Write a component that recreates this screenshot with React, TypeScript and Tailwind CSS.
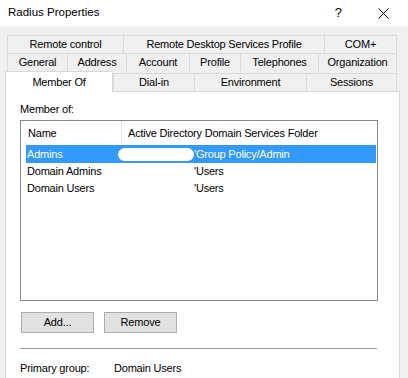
import React from "react";

const font = { fontFamily: '"Liberation Sans", Arial, sans-serif' };

function Tab({ w, label, last }: { w: number; label: string; last?: boolean }) {
  return (
    <div
      className={`h-[18px] flex items-center justify-center border-t border-l border-[#d9d9d9] bg-[#f0f0f0] text-[11px] tracking-[-0.2px] leading-none text-black whitespace-nowrap ${last ? "border-r" : ""}`}
      style={{ width: w }}
    >
      {label}
    </div>
  );
}

export default function App() {
  return (
    <div className="w-[408px] h-[378px] bg-[#f0f0f0] overflow-hidden text-black" style={font}>
      {/* title bar */}
      <div className="h-[26px] bg-white flex items-center pl-[8px] pr-[16px] text-[11.5px]">
        <span>Radius Properties</span>
        <span className="ml-auto mr-[36px] text-[13px]">?</span>
        <svg width="11" height="11" viewBox="0 0 11 11" className="mr-[3px]">
          <path d="M0.5 0.5 L10.5 10.5 M10.5 0.5 L0.5 10.5" stroke="#000" strokeWidth="1" />
        </svg>
      </div>

      <div className="pt-[9px] pl-[5px] w-[400px]">
        {/* row 1 */}
        <div className="flex pl-[2px]">
          <Tab w={116} label="Remote control" />
          <Tab w={201} label="Remote Desktop Services Profile" />
          <Tab w={73} label="COM+" last />
        </div>
        {/* row 2 */}
        <div className="flex pl-[2px]">
          <Tab w={60} label="General" />
          <Tab w={59} label="Address" />
          <Tab w={63} label="Account" />
          <Tab w={51} label="Profile" />
          <Tab w={78} label="Telephones" />
          <Tab w={79} label="Organization" last />
        </div>
        {/* row 3 */}
        <div className="flex items-end">
          <div className="relative z-10 w-[108px] h-[21px] -mb-px bg-white border-t border-l border-r border-[#d9d9d9] flex items-start justify-center pt-[4px] text-[11px] tracking-[-0.2px] leading-[12px]">
            Member Of
          </div>
          <Tab w={81} label="Dial-in" />
          <Tab w={112} label="Environment" />
          <Tab w={91} label="Sessions" last />
        </div>

        {/* panel */}
        <div className="h-[300px] bg-white border border-[#d9d9d9] pl-[14px] pr-[21px] pt-[10px] text-[11px] tracking-[-0.2px]">
          <div className="h-[15px] leading-[15px]">Member of:</div>
          <div className="mt-[3px] h-[181px] border border-[#828790] bg-white pl-[5px] pr-[1px]">
            <div className="flex h-[24px] items-center">
              <div className="w-[96px] h-full flex items-center pl-[2px] border-r border-[#e5e5e5]">Name</div>
              <div className="pl-[6px]">Active Directory Domain Services Folder</div>
            </div>
            <div className="flex h-[18px] items-center bg-[#3399ff] text-white relative">
              <div className="w-[92px] pl-[1px]">Admins</div>
              <div className="w-[76px] h-[13px] rounded-full bg-white"></div>
              <div>'Group Policy/Admin</div>
            </div>
            <div className="flex h-[17px] items-center">
              <div className="w-[168px] pl-[1px]">Domain Admins</div>
              <div>'Users</div>
            </div>
            <div className="flex h-[17px] items-center">
              <div className="w-[168px] pl-[1px]">Domain Users</div>
              <div>'Users</div>
            </div>
          </div>

          <div className="flex gap-[10px] mt-[11px] pl-[1px]">
            <button className="w-[73px] h-[21px] bg-[#e1e1e1] border border-[#adadad] text-[11px] leading-none">Add...</button>
            <button className="w-[73px] h-[21px] bg-[#e1e1e1] border border-[#adadad] text-[11px] leading-none">Remove</button>
          </div>

          <div className="mt-[15px] h-px bg-[#a0a0a0] mr-[1px]"></div>

          <div className="flex mt-[12px] h-[15px] items-center">
            <div className="w-[94px]">Primary group:</div>
            <div>Domain Users</div>
          </div>
        </div>
      </div>
    </div>
  );
}
